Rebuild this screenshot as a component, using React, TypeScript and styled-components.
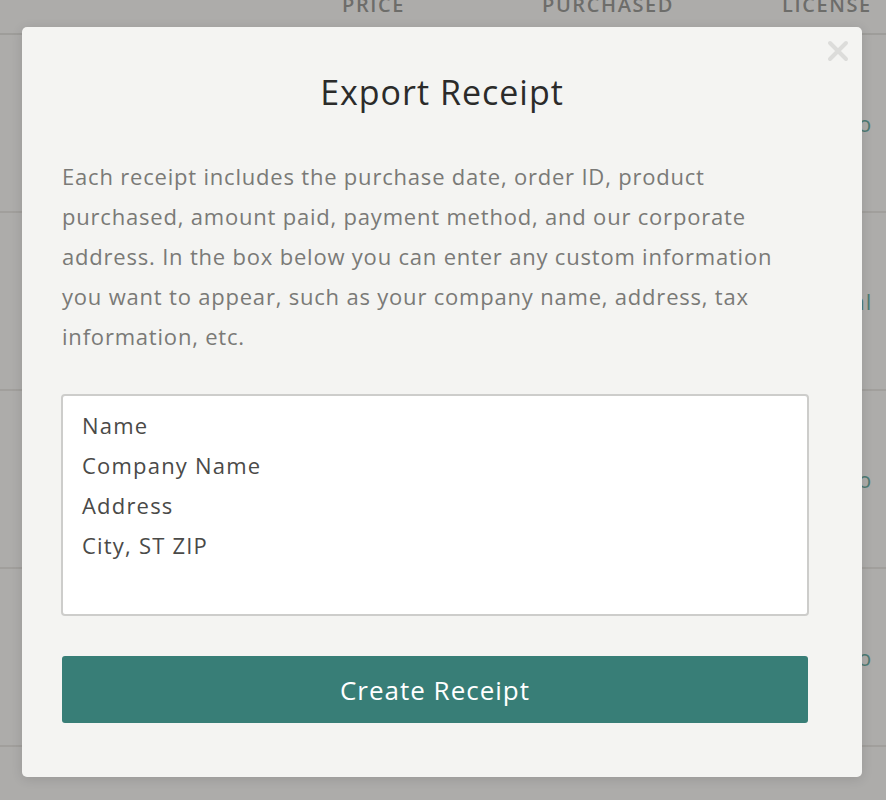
import React from "react";
import styled, { createGlobalStyle } from "styled-components";

const Global = createGlobalStyle`
  html, body { margin: 0; padding: 0; height: 100%; overflow: hidden; }
  body { background: #adacaa; font-family: "Open Sans", Lato, sans-serif; }
  #root { height: 100%; }
`;

const Page = styled.div`
  position: relative;
  height: 800px;
  overflow: hidden;
  background: #adacaa;
`;

const Table = styled.div`
  display: flex;
  flex-direction: column;
  margin-top: -24px;
`;

const HeaderRow = styled.div`
  display: grid;
  grid-template-columns: 342px 200px 240px 1fr;
  height: 57px;
  align-items: center;
  border-bottom: 2px solid #9e9d9a;
  font-family: "Open Sans", sans-serif;
  font-weight: 600;
  font-size: 20px;
  letter-spacing: 1.6px;
  color: #6d6d6a;
`;

const Row = styled.div`
  display: grid;
  grid-template-columns: 1fr;
  height: 176px;
  align-items: center;
  justify-items: end;
  padding-right: 14px;
  border-bottom: 2px solid #a19f9c;
  font-size: 22px;
  letter-spacing: 0.8px;
  color: #4d7a73;
`;

const Overlay = styled.div`
  position: absolute;
  inset: 0;
  padding: 27px 0 0 22px;
`;

const Modal = styled.div`
  position: relative;
  box-sizing: border-box;
  width: 840px;
  height: 750px;
  background: #f4f4f2;
  border-radius: 5px;
  padding: 40px 54px 54px 40px;
  display: flex;
  flex-direction: column;
  box-shadow: 0 2px 12px rgba(0, 0, 0, 0.12);
`;

const Close = styled.button`
  position: absolute;
  top: 12px;
  right: 12px;
  width: 24px;
  height: 24px;
  padding: 0;
  border: 0;
  background: none;
  display: flex;
  align-items: center;
  justify-content: center;
`;

const Title = styled.h2`
  margin: 0 0 0 14px;
  text-align: center;
  font-family: "Open Sans", sans-serif;
  font-weight: 400;
  font-size: 34px;
  line-height: 50px;
  letter-spacing: 1px;
  color: #2b2b2a;
`;

const Body = styled.p`
  margin: 39px 0 0 0;
  font-size: 22px;
  line-height: 40px;
  letter-spacing: 0.8px;
  color: #7a7a77;
  white-space: nowrap;
`;

const Field = styled.textarea`
  margin: 38px 0 0 -1px;
  box-sizing: border-box;
  width: 748px;
  height: 222px;
  border: 2px solid #cdcdcb;
  border-radius: 4px;
  background: #fff;
  padding: 9px 19px;
  font-family: "Open Sans", sans-serif;
  font-size: 22px;
  line-height: 40px;
  letter-spacing: 1.2px;
  color: #4a4a48;
  resize: none;
  outline: none;
`;

const Button = styled.button`
  margin-top: 40px;
  height: 67px;
  width: 746px;
  border: 0;
  border-radius: 3px;
  background: #387e77;
  color: #fff;
  font-family: "Open Sans", sans-serif;
  font-size: 26px;
  letter-spacing: 1px;
`;

const lines = [
  "Each receipt includes the purchase date, order ID, product",
  "purchased, amount paid, payment method, and our corporate",
  "address. In the box below you can enter any custom information",
  "you want to appear, such as your company name, address, tax",
  "information, etc.",
];

export default function App() {
  return (
    <>
      <Global />
      <Page>
        <Table>
          <HeaderRow>
            <span />
            <span>PRICE</span>
            <span>PURCHASED</span>
            <span>LICENSE</span>
          </HeaderRow>
          {["Solo", "Commercial", "Solo", "Solo"].map((t, i) => (
            <Row key={i}>
              <span>{t}</span>
            </Row>
          ))}
        </Table>
        <Overlay>
          <Modal>
            <Close aria-label="Close">
              <svg width="22" height="22" viewBox="0 0 22 22">
                <path d="M3 3 L19 19 M19 3 L3 19" stroke="#dcdcda" strokeWidth="4" strokeLinecap="round" />
              </svg>
            </Close>
            <Title>Export Receipt</Title>
            <Body>
              {lines.map((l, i) => (
                <React.Fragment key={i}>
                  {l}
                  {i < lines.length - 1 && <br />}
                </React.Fragment>
              ))}
            </Body>
            <Field defaultValue={"Name\nCompany Name\nAddress\nCity, ST ZIP"} />
            <Button>Create Receipt</Button>
          </Modal>
        </Overlay>
      </Page>
    </>
  );
}
